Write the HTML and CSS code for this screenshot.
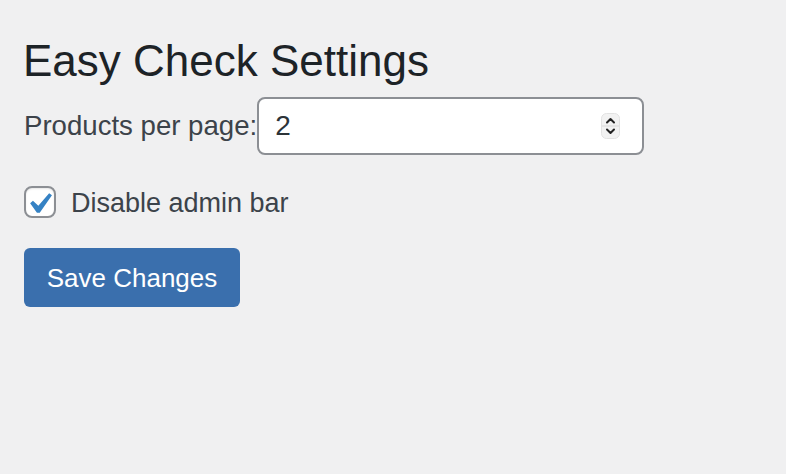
FILE: index.html
```html
<!DOCTYPE html>
<html lang="en">
<head>
<meta charset="utf-8">
<title>Easy Check Settings</title>
<link rel="stylesheet" href="styles.css">
</head>
<body>
<div class="wrap">
  <h1 class="title">Easy Check Settings</h1>
  <form class="form">
    <div class="field-row">
      <label class="field-label" for="ppp">Products per page:</label>
      <div class="number-field" id="ppp">
        <span class="number-value">2</span>
        <svg class="spinner" width="19" height="26" viewBox="0 0 19 26" aria-hidden="true">
          <rect x="0.5" y="0.5" width="18" height="25" rx="5" fill="#f2f2f2" stroke="#e2e2e2"/>
          <line x1="1" y1="13" x2="18" y2="13" stroke="#d8d8d8" stroke-width="1"/>
          <polyline points="6,9.5 9.5,6 13,9.5" fill="none" stroke="#222" stroke-width="2" stroke-linecap="round" stroke-linejoin="round"/>
          <polyline points="6,16.5 9.5,20 13,16.5" fill="none" stroke="#222" stroke-width="2" stroke-linecap="round" stroke-linejoin="round"/>
        </svg>
      </div>
    </div>
    <div class="check-row">
      <span class="checkbox">
        <svg class="checkmark" viewBox="0 0 20 20" aria-hidden="true"><path d="M14.83 4.89l1.34.94-5.81 8.38H9.02L5.78 9.67l1.34-1.25 2.57 2.4z" fill="#3582c4"/></svg>
      </span>
      <span class="check-label">Disable admin bar</span>
    </div>
    <div class="actions">
      <button type="button" class="button-primary">Save Changes</button>
    </div>
  </form>
</div>
</body>
</html>
```
FILE: styles.css
```css
html, body {
  margin: 0;
  padding: 0;
  background: #f0f0f1;
}
body {
  font-family: "Liberation Sans", Arial, sans-serif;
  color: #3c434a;
}
.wrap {
  padding: 35px 24px 0 24px;
}
.title {
  margin: 0 0 0 -1px;
  font-size: 44px;
  line-height: 52px;
  font-weight: 400;
  color: #1d2327;
}
.form {
  display: flex;
  flex-direction: column;
  align-items: flex-start;
}
.field-row {
  margin-top: 10px;
  display: flex;
  align-items: baseline;
}
.field-label {
  font-size: 27.6px;
  line-height: 32px;
  color: #3c434a;
}
.number-field {
  box-sizing: border-box;
  width: 387px;
  height: 58px;
  border: 2px solid #8c8f94;
  border-radius: 8px;
  background: #fff;
  padding: 0 22px 0 16px;
  display: flex;
  align-items: center;
}
.number-value {
  flex: 1;
  font-size: 28px;
  line-height: 32px;
  color: #2c3338;
}
.spinner {
  display: block;
}
.check-row {
  margin-top: 30px;
  display: flex;
  align-items: center;
  gap: 15px;
}
.checkbox {
  position: relative;
  box-sizing: border-box;
  width: 32px;
  height: 32px;
  border: 2px solid #8c8f94;
  border-radius: 8px;
  background: #fff;
  box-shadow: inset 0 1px 2px rgba(0,0,0,0.1);
}
.checkmark {
  position: absolute;
  left: -8px;
  top: -5px;
  width: 42px;
  height: 42px;
}
.check-label {
  font-size: 27px;
  line-height: 32px;
  color: #3c434a;
  padding-top: 2px;
}
.actions {
  margin-top: 29px;
}
.button-primary {
  box-sizing: border-box;
  height: 59px;
  width: 216px;
  padding: 0;
  border: 0;
  border-radius: 6px;
  background: #3a6fad;
  color: #fff;
  font-family: "Liberation Sans", Arial, sans-serif;
  font-size: 26px;
  line-height: 32px;
}
```
